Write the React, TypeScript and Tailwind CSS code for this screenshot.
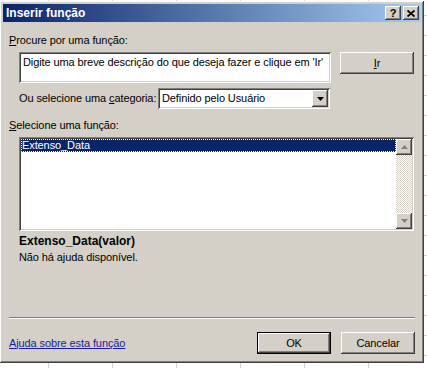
import React from 'react';

const raised =
  'shadow-[inset_-1px_-1px_#404040,inset_1px_1px_#ffffff,inset_-2px_-2px_#808080,inset_2px_2px_#d4d0c8]';
const sunken =
  'shadow-[inset_1px_1px_#808080,inset_-1px_-1px_#ffffff,inset_2px_2px_#404040,inset_-2px_-2px_#d4d0c8]';

const Arrow: React.FC<{ down?: boolean; color?: string }> = ({ down, color = '#000' }) => (
  <svg width="7" height="4" viewBox="0 0 7 4">
    {down ? <path d="M0 0h7L3.5 4z" fill={color} /> : <path d="M0 4h7L3.5 0z" fill={color} />}
  </svg>
);

export default function App() {
  return (
    <div
      className="w-[427px] h-[368px] overflow-hidden bg-white bg-[linear-gradient(to_right,#d4d4d4_1px,transparent_1px),linear-gradient(to_bottom,#d4d4d4_1px,transparent_1px)] bg-[size:64px_20px] bg-[position:48px_15px] pt-px text-[11px] leading-[13px] tracking-[-0.1px] text-black whitespace-nowrap"
      style={{ fontFamily: '"Liberation Sans", Arial, sans-serif' }}
    >
      <div className={`w-[424px] h-[362px] bg-[#d4d0c8] p-[3px] flex flex-col ${raised}`}>
        {/* title bar */}
        <div className="h-[18px] flex items-center justify-between pl-[3px] pr-[2px] bg-[linear-gradient(to_right,#0a246a,#a6caf0)]">
          <span className="text-white font-bold text-[12px] leading-[14px] tracking-normal">Inserir função</span>
          <div className="flex gap-[2px]">
            <div className={`w-[16px] h-[14px] bg-[#d4d0c8] flex items-center justify-center font-bold text-[11px] ${raised}`}>?</div>
            <div className={`w-[16px] h-[14px] bg-[#d4d0c8] flex items-center justify-center ${raised}`}>
              <svg width="8" height="7" viewBox="0 0 8 7">
                <path d="M0.5 0.5l7 6M7.5 0.5l-7 6" stroke="#000" strokeWidth="1.8" />
              </svg>
            </div>
          </div>
        </div>

        <div className="flex flex-col px-[6px]">
          <div className="mt-[12px]">
            <span className="underline">P</span>rocure por uma função:
          </div>

          <div className="mt-[5px] ml-[10px] flex items-start gap-[9px]">
            <div className={`w-[312px] h-[31px] bg-white px-[4px] pt-[4px] overflow-hidden ${sunken}`}>
              Digite uma breve descrição do que deseja fazer e clique em 'Ir'
            </div>
            <div className={`w-[74px] h-[22px] flex items-center justify-center ${raised}`}>
              <span className="underline">I</span>r
            </div>
          </div>

          <div className="mt-[5px] ml-[10px] flex items-center h-[21px]">
            <span className="w-[139px]">
              Ou selecione uma <span className="underline">c</span>ategoria:
            </span>
            <div className={`w-[172px] h-[21px] bg-white flex items-center p-[2px] ${sunken}`}>
              <span className="flex-1 pl-[2px]">Definido pelo Usuário</span>
              <div className={`w-[16px] h-[17px] bg-[#d4d0c8] flex items-center justify-center ${raised}`}>
                <Arrow down />
              </div>
            </div>
          </div>

          <div className="mt-[10px]">
            <span className="underline">S</span>elecione uma função:
          </div>

          <div className={`mt-[5px] ml-[10px] w-[395px] h-[94px] bg-white p-[2px] flex ${sunken}`}>
            <div className="flex-1">
              <div className="h-[13px] bg-[#0a246a] text-white pl-[1px] outline-1 outline-dotted outline-offset-[-1px] outline-white">
                Extenso_Data
              </div>
            </div>
            <div className="w-[16px] flex flex-col">
              <div className={`w-[16px] h-[16px] bg-[#d4d0c8] flex items-center justify-center ${raised}`}>
                <Arrow color="#808080" />
              </div>
              <div className="flex-1 bg-[repeating-conic-gradient(#d4d0c8_0_25%,#ffffff_0_50%)] bg-[size:2px_2px]" />
              <div className={`w-[16px] h-[16px] bg-[#d4d0c8] flex items-center justify-center ${raised}`}>
                <Arrow down color="#808080" />
              </div>
            </div>
          </div>

          <div className="mt-[4px] ml-[10px] font-bold text-[12px] tracking-normal">Extenso_Data(valor)</div>
          <div className="mt-[3px] ml-[10px]">Não há ajuda disponível.</div>

          <div className="mt-[53px] h-[2px] border-t border-t-[#808080] border-b border-b-white" />

          <div className="mt-[13px] flex items-center">
            <span className="flex-1 text-[#1a1aa6] underline">Ajuda sobre esta função</span>
            <div className="w-[74px] h-[22px] border border-black">
              <div className={`w-full h-full flex items-center justify-center ${raised}`}>OK</div>
            </div>
            <div className={`ml-[10px] w-[74px] h-[22px] flex items-center justify-center ${raised}`}>Cancelar</div>
          </div>
        </div>
      </div>
    </div>
  );
}
